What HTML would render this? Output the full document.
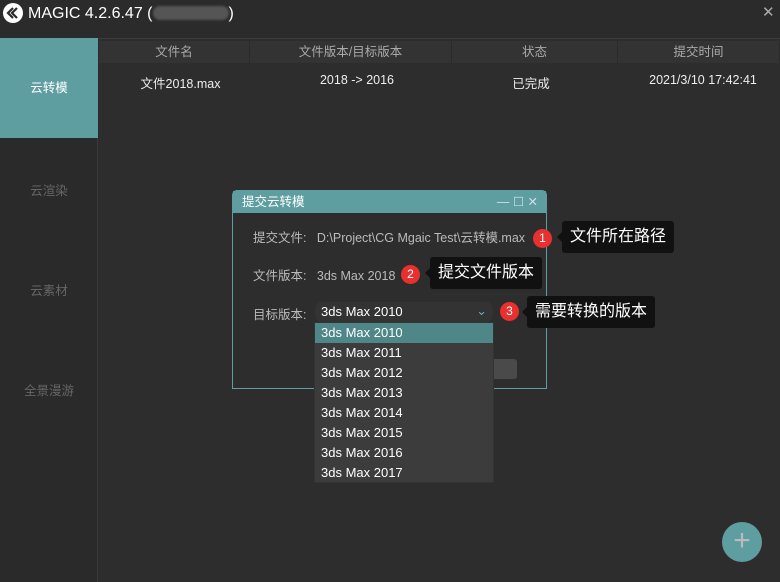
<!DOCTYPE html><html><head><meta charset="utf-8"><style>
*{margin:0;padding:0;box-sizing:border-box}
body{width:780px;height:582px;background:#2b2b2b;font-family:"Liberation Sans","Noto Sans CJK SC",sans-serif;color:#ddd;position:relative;overflow:hidden;font-size:12.5px}
.a{position:absolute}
.side{left:0;top:38px;width:98px;height:544px;background:#2a2a2a;border-right:1px solid #3a3a3a}
.side div{position:absolute;width:98px;text-align:center;color:#666;font-size:12.5px}
.main{left:99px;top:38px;width:681px;height:544px;background:#2d2d2d;border-top:1px solid #3a3a3a}
.hd{position:absolute;top:2px;height:22px;line-height:22px;background:#333;text-align:center;color:#aaa;border-right:1px solid #2a2a2a}
.rw{position:absolute;top:34px;text-align:center;color:#eee}
.tip{position:absolute;background:#111;color:#fff;font-size:16px;height:32px;line-height:32px;padding:0 8px;border-radius:3px}
.tip:before{content:"";position:absolute;left:-5px;top:11px;border:5px solid transparent;border-right-color:#111;border-left:0}
.dot{position:absolute;width:19px;height:19px;border-radius:50%;background:#e8302f;color:#fff;text-align:center;line-height:19px;font-size:12px}
.li{height:20px;line-height:20px;padding-left:6px;color:#fff;font-size:13px}
</style></head><body>
<svg class="a" style="left:3px;top:3px" width="20" height="20" viewBox="0 0 20 20"><circle cx="10" cy="10" r="10" fill="#fff"/><path d="M10 5L5 10L10 15M14 5L9 10L14 15" stroke="#2b2b2b" stroke-width="2.2" fill="none"/></svg>
<div class="a" style="left:28px;top:5px;font-size:16px;color:#fff">MAGIC 4.2.6.47 (<span style="display:inline-block;width:76px;height:14px;background:#555;border-radius:7px;vertical-align:-2px;filter:blur(1px)"></span>)</div>
<div class="a" style="left:762px;top:3px;color:#aaa;font-size:15px">✕</div>
<div class="a side">
<div style="top:0;height:100px;background:#5f9ea0;color:#fff;line-height:100px">云转模</div>
<div style="top:142px">云渲染</div>
<div style="top:242px">云素材</div>
<div style="top:342px">全景漫游</div>
</div>
<div class="a main">
<div class="hd" style="left:0;width:151px">文件名</div>
<div class="hd" style="left:151px;width:202px">文件版本/目标版本</div>
<div class="hd" style="left:353px;width:166px">状态</div>
<div class="hd" style="left:519px;width:162px">提交时间</div>
<div class="rw" style="left:0;width:163px">文件2018.max</div>
<div class="rw" style="left:163px;width:190px">2018 -&gt; 2016</div>
<div class="rw" style="left:353px;width:158px">已完成</div>
<div class="rw" style="left:519px;width:170px">2021/3/10 17:42:41</div>
</div>
<div class="a" style="left:232px;top:190px;width:315px;height:199px;border:1px solid #5f9ea0;border-radius:5px 5px 0 0;background:#2d2d2d">
<div style="height:22px;background:#5f9ea0;color:#fff;line-height:22px;padding-left:9px;font-size:12.5px">提交云转模<span style="position:absolute;right:8px;top:0;color:#cde">— ☐ ✕</span></div>
<div class="a" style="left:20px;top:36px;color:#bbb">提交文件:&nbsp;&nbsp; D:\Project\CG Mgaic Test\云转模.max</div>
<div class="a" style="left:20px;top:74px;color:#bbb">文件版本:&nbsp;&nbsp; 3ds Max 2018</div>
<div class="a" style="left:20px;top:113px;color:#bbb">目标版本:</div>
<div class="a" style="left:82px;top:111px;width:178px;height:20px;background:#333;border-radius:7px;color:#fff;line-height:20px;padding-left:6px;font-size:13px">3ds Max 2010<span style="position:absolute;right:6px;top:-1px;color:#6ab">⌄</span></div>
<div class="a" style="left:231px;top:168px;width:53px;height:20px;background:#4a4a4a;border-radius:3px"></div>
</div>
<div class="a" style="left:314px;top:322px;width:180px;height:161px;background:#3c3c3c;border:1px solid #333">
<div class="li" style="background:#4f8688">3ds Max 2010</div><div class="li">3ds Max 2011</div><div class="li">3ds Max 2012</div><div class="li">3ds Max 2013</div><div class="li">3ds Max 2014</div><div class="li">3ds Max 2015</div><div class="li">3ds Max 2016</div><div class="li">3ds Max 2017</div>
</div>
<div class="dot" style="left:533px;top:229px">1</div>
<div class="dot" style="left:401px;top:265px">2</div>
<div class="dot" style="left:500px;top:302px">3</div>
<div class="tip" style="left:562px;top:221px">文件所在路径</div>
<div class="tip" style="left:430px;top:257px">提交文件版本</div>
<div class="tip" style="left:527px;top:296px">需要转换的版本</div>
<div class="a" style="left:722px;top:522px;width:40px;height:40px;border-radius:50%;background:#5f9ea0;color:#bbb;text-align:center;line-height:38px;font-size:30px">+</div>
</body></html>
